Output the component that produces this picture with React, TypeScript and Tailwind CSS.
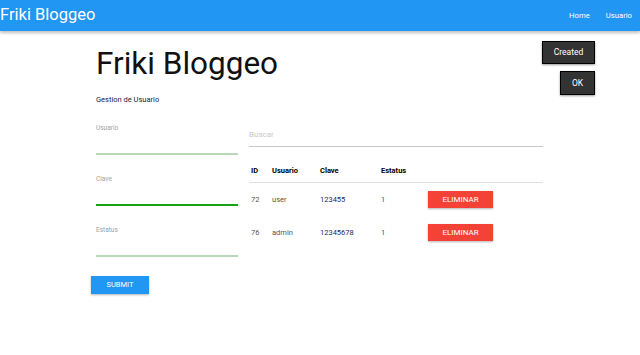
import React from "react";

const App = () => {
  const users = [
    { id: 72, usuario: "user", clave: "123455", estatus: 1 },
    { id: 76, usuario: "admin", clave: "12345678", estatus: 1 },
  ];

  const fields = [
    { label: "Usuario", line: "border-[#b8d8b8]" },
    { label: "Clave", line: "border-[#16a316]" },
    { label: "Estatus", line: "border-[#b8d8b8]" },
  ];

  return (
    <div className="relative min-h-[355px] w-[640px] bg-white font-['Roboto',sans-serif]">
      <nav className="flex h-[31px] items-center justify-between bg-[#2196f3] shadow-[0_2px_3px_rgba(0,0,0,0.25)]">
        <span className="text-[16.5px] leading-none text-white">Friki Bloggeo</span>
        <div className="flex items-center gap-[16px] pr-[8px] text-[7.7px] text-white">
          <span>Home</span>
          <span>Usuario</span>
        </div>
      </nav>

      <div className="absolute right-[45px] top-[41px] flex flex-col items-end gap-[7px]">
        <button className="h-[23px] w-[53px] border border-black bg-[#333] text-[8.5px] text-white shadow-[0_1px_2px_rgba(0,0,0,0.4)]">
          Created
        </button>
        <button className="h-[24px] w-[35px] border border-black bg-[#333] text-[8.5px] text-white shadow-[0_1px_2px_rgba(0,0,0,0.4)]">
          OK
        </button>
      </div>

      <div className="mx-auto w-[448px]">
        <h1 className="mt-[17px] h-[32px] text-[31.5px] leading-none text-[#111]">Friki Bloggeo</h1>
        <p className="mt-[14px] text-[7.5px] leading-[12px] text-[#1a1a40]">Gestion de Usuario</p>

        <div className="mt-[17px] flex">
          <div className="w-[142px] shrink-0">
            {fields.map((f) => (
              <div key={f.label} className="mb-[19px]">
                <div className="text-[6.5px] leading-[10px] text-[#a0a0a0]">{f.label}</div>
                <div className={`h-[22px] border-b-2 ${f.line}`} />
              </div>
            ))}
            <button className="-ml-[5px] block h-[18px] w-[58px] bg-[#2196f3] text-[7.5px] text-white shadow-[0_1px_2px_rgba(0,0,0,0.3)]">
              SUBMIT
            </button>
          </div>

          <div className="ml-[11px] w-[294px]">
            <div className="flex h-[24px] items-end border-b border-[#c8c8c8] pb-[5px] text-[8px] text-[#c8c8c8]">
              Buscar
            </div>
            <div className="mt-[16px] flex h-[20px] items-center border-b border-[#e0e0e0] pb-[3px] text-[7.5px] font-bold text-black">
              <span className="w-[21px] pl-[2px]">ID</span>
              <span className="w-[48px] pl-[2px]">Usuario</span>
              <span className="w-[61px] pl-[2px]">Clave</span>
              <span className="w-[47px] pl-[2px]">Estatus</span>
            </div>
            {users.map((u) => (
              <div key={u.id} className="flex h-[33px] items-center text-[7.5px] text-[#555]">
                <span className="w-[21px] pl-[2px]">{u.id}</span>
                <span className="w-[48px] pl-[2px]">{u.usuario}</span>
                <span className="w-[61px] pl-[2px] text-[#2a1a66]">{u.clave}</span>
                <span className="w-[47px] pl-[2px]">{u.estatus}</span>
                <button className="ml-[2px] h-[17px] w-[65px] bg-[#f44336] text-[8px] text-white shadow-[0_1px_2px_rgba(0,0,0,0.3)]">
                  ELIMINAR
                </button>
              </div>
            ))}
          </div>
        </div>
      </div>
    </div>
  );
};

export default App;
